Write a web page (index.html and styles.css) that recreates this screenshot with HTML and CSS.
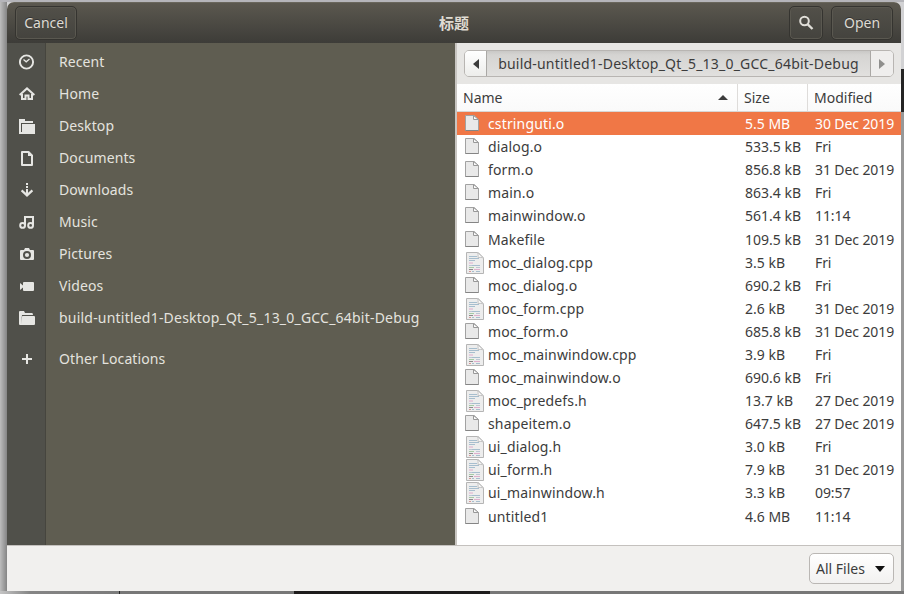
FILE: index.html
```html
<!DOCTYPE html>
<html lang="en">
<head>
  <meta charset="UTF-8" />
  <meta name="viewport" content="width=device-width, initial-scale=1.0"/>
  <title>标题</title>
  <link rel="stylesheet" href="styles.css">
</head>
<body>
  <div class="backdrop backdrop-left"></div>
  <div class="backdrop backdrop-right"></div>
  <div class="backdrop backdrop-line"></div>
  <div class="backdrop backdrop-bottom"></div>
  <div class="backdrop backdrop-top"></div>

  <div class="dialog">
    <div class="titlebar">
      <button class="dark-button cancel">Cancel</button>
      <div class="title">标题</div>
      <button class="dark-button search" aria-label="Search">
        <svg width="16" height="16" viewBox="0 0 16 16"><circle cx="6.5" cy="6" r="4.3" fill="none" stroke="#e0ded8" stroke-width="2"/><path d="M9.5 9.2l5 4.8" stroke="#e0ded8" stroke-width="2.4"/></svg>
      </button>
      <button class="dark-button open">Open</button>
    </div>

    <div class="content">
      <div class="sidebar">
        <div class="place">
          <svg class="place-icon" viewBox="0 0 16 16"><circle cx="7.5" cy="8" r="6.6" fill="none" stroke="#e6e6e3" stroke-width="1.9"/><path d="M4.500 5.5l2.7 2.3L10.500 5" fill="none" stroke="#e6e6e3" stroke-width="1.3"/></svg>
          <span class="place-name">Recent</span>
        </div>
        <div class="place">
          <svg class="place-icon" viewBox="0 0 16 16"><path d="M.6 9L8 2.4 15.4 9" fill="none" stroke="#e6e6e3" stroke-width="2"/><path d="M2 8v6h5v-4h2v4h5V8h-2L8 4.400 4 8z" fill="#e6e6e3" fill-opacity="0"/><path d="M3 8v5h3.500V9.500h3V13H13V8" fill="none" stroke="#e6e6e3" stroke-width="2"/></svg>
          <span class="place-name">Home</span>
        </div>
        <div class="place">
          <svg class="place-icon" viewBox="0 0 16 16"><path d="M0 1h6v2h8v2H2v9h1V6h13v10H0z" fill="#e6e6e3"/></svg>
          <span class="place-name">Desktop</span>
        </div>
        <div class="place">
          <svg class="place-icon" viewBox="0 0 16 16"><path d="M3 2h6.5L13 5.5V15H3z" fill="none" stroke="#e6e6e3" stroke-width="2" stroke-linejoin="round"/><path d="M9 2v4h4z" fill="#e6e6e3"/></svg>
          <span class="place-name">Documents</span>
        </div>
        <div class="place">
          <svg class="place-icon" viewBox="0 0 16 16"><path d="M7 1h2v2H7zM7 4h2v2H7zM7 7h2v5H7z" fill="#e6e6e3"/><path d="M2.6 8.4L8 13.4l5.4-5" fill="none" stroke="#e6e6e3" stroke-width="2.2"/></svg>
          <span class="place-name">Downloads</span>
        </div>
        <div class="place">
          <svg class="place-icon" viewBox="0 0 16 16"><path d="M6 11V3h8v8" fill="none" stroke="#e6e6e3" stroke-width="2"/><circle cx="3.6" cy="11.4" r="2.4" fill="none" stroke="#e6e6e3" stroke-width="2"/><circle cx="11.6" cy="11.4" r="2.4" fill="none" stroke="#e6e6e3" stroke-width="2"/></svg>
          <span class="place-name">Music</span>
        </div>
        <div class="place">
          <svg class="place-icon" viewBox="0 0 16 16"><path fill-rule="evenodd" d="M2 4h3l1-2h4l1 2h3q1 0 1 1v8q0 1-1 1H2q-1 0-1-1V5q0-1 1-1zM8 5a4 4 0 1 0 0 8 4 4 0 0 0 0-8z" fill="#e6e6e3"/><circle cx="8" cy="9" r="2.1" fill="#e6e6e3"/></svg>
          <span class="place-name">Pictures</span>
        </div>
        <div class="place">
          <svg class="place-icon" viewBox="0 0 16 16"><path d="M1 5l3 2.500V5q0-1 1-1h9q1 0 1 1v7q0 1-1 1H5q-1 0-1-1V9.500L1 12z" fill="#e6e6e3"/></svg>
          <span class="place-name">Videos</span>
        </div>
        <div class="place">
          <svg class="place-icon" viewBox="0 0 16 16"><path d="M0 2q0-1 1-1h4l1 2h7q1 0 1 2H3L2 14 3.2 6H15q1 0 1 1v7q0 1-1 1H1q-1 0-1-1z" fill="#e6e6e3"/></svg>
          <span class="place-name path-text">build-untitled1-Desktop_Qt_5_13_0_GCC_64bit-Debug</span>
        </div>
        <div class="place other">
          <svg class="place-icon" viewBox="0 0 16 16"><path d="M7 3h2v4h4v2H9v4H7V9H3V7h4z" fill="#e6e6e3"/></svg>
          <span class="place-name">Other Locations</span>
        </div>
      </div>

      <div class="browser">
        <div class="pathbar-area">
          <div class="pathbar">
            <button class="path-arrow" aria-label="Back"><svg width="6" height="10" viewBox="0 0 6 10"><path d="M6 0v10L0 5z" fill="#3c3c3c"/></svg></button>
            <button class="path-current path-text">build-untitled1-Desktop_Qt_5_13_0_GCC_64bit-Debug</button>
            <button class="path-arrow next" aria-label="Forward"><svg width="6" height="10" viewBox="0 0 6 10"><path d="M0 0v10l6-5z" fill="#8f8f8d"/></svg></button>
          </div>
        </div>
        <div class="file-row file-head">
          <span class="head-name">Name <svg width="10" height="5" viewBox="0 0 10 5"><path d="M0 5L5 0l5 5z" fill="#3c3c3c"/></svg></span>
          <span class="head-size">Size</span>
          <span class="head-date">Modified</span>
        </div>
        <div class="files" id="files"></div>
      </div>
    </div>

    <div class="footer">
      <button class="filter">All Files <svg width="10" height="6" viewBox="0 0 10 6"><path d="M0 0h10L5 6z" fill="#111"/></svg></button>
    </div>
  </div>

  <script>
    const files = [
      ["cstringuti.o", "5.5 MB", "30 Dec 2019"],
      ["dialog.o", "533.5 kB", "Fri"],
      ["form.o", "856.8 kB", "31 Dec 2019"],
      ["main.o", "863.4 kB", "Fri"],
      ["mainwindow.o", "561.4 kB", "11:14"],
      ["Makefile", "109.5 kB", "31 Dec 2019"],
      ["moc_dialog.cpp", "3.5 kB", "Fri"],
      ["moc_dialog.o", "690.2 kB", "Fri"],
      ["moc_form.cpp", "2.6 kB", "31 Dec 2019"],
      ["moc_form.o", "685.8 kB", "31 Dec 2019"],
      ["moc_mainwindow.cpp", "3.9 kB", "Fri"],
      ["moc_mainwindow.o", "690.6 kB", "Fri"],
      ["moc_predefs.h", "13.7 kB", "27 Dec 2019"],
      ["shapeitem.o", "647.5 kB", "27 Dec 2019"],
      ["ui_dialog.h", "3.0 kB", "Fri"],
      ["ui_form.h", "7.9 kB", "31 Dec 2019"],
      ["ui_mainwindow.h", "3.3 kB", "09:57"],
      ["untitled1", "4.6 MB", "11:14"]
    ];

    const plainIcon = `<svg class="file-icon" width="14" height="16" viewBox="0 0 14 16">
      <path d="M.5.5h8.7l4.3 4.3v10.7H.5z" fill="#e9e9e9" stroke="#a2a2a2"/>
      <path d="M.5 15.5h13" stroke="#858585"/>
      <path d="M8.5.5v4h5z" fill="#fafafa" stroke="#999"/></svg>`;

    const sourceIcon = `<svg class="file-icon source" width="18" height="22" viewBox="0 0 18 22">
      <path d="M.5.5h11.7l5.3 5.3v15.7H.5z" fill="#ededed" stroke="#b5b5b5"/>
      <path d="M11.5.5q1 2 .5 5 3-.5 5.5.5z" fill="#fafafa" stroke="#c4c4c4"/>
      <g fill="none" stroke-width=".8" opacity=".8">
        <path d="M3 4.5h8M3 6.5h10M3 8.5h6M6 13.5h8" stroke="#7fa3bc"/>
        <path d="M3 11h4M8 17.5h6" stroke="#d98bbb"/>
        <path d="M3 13.5h3M10 15.5h4" stroke="#a3b0c4"/>
        <path d="M3 15.5h5" stroke="#7db77d"/>
        <path d="M3 17.5h4" stroke="#555"/>
        <path d="M3 19.5h2" stroke="#c66"/>
        <path d="M6 19.5h2M10 19.5h4" stroke="#7fa3bc"/>
      </g></svg>`;

    const filesEl = document.getElementById("files");
    files.forEach(([name, size, date], i) => {
      const row = document.createElement("div");
      row.className = i === 0 ? "file-row selected" : "file-row";
      const icon = /\.(cpp|h)$/.test(name) ? sourceIcon : plainIcon;
      row.innerHTML = `<span class="icon-cell">${icon}</span><span class="file-name">${name}</span><span class="file-size">${size}</span><span class="file-date">${date}</span>`;
      filesEl.appendChild(row);
    });
  </script>
</body>
</html>
```
FILE: styles.css
```css
* {
  box-sizing: border-box;
}

body {
  margin: 0;
  padding: 2px 3px 3px 7px;
  height: 594px;
  overflow: hidden;
  position: relative;
  background-color: #d2d2d4;
  font-family: "Noto Sans", "Noto Sans CJK SC", sans-serif;
  font-size: 14px;
  color: #3c3c3c;
}

button {
  font: inherit;
  color: inherit;
  padding: 0;
  margin: 0;
}

svg {
  display: block;
  flex: none;
}

/* windows behind the dialog */
.backdrop {
  position: absolute;
}

.backdrop-left {
  left: 0;
  top: 0;
  width: 7px;
  height: 594px;
  background: linear-gradient(to right, #bdbdbd, #858585);
}

.backdrop-right {
  right: 0;
  top: 69px;
  width: 3px;
  height: 43px;
  background: #242424;
}

.backdrop-line {
  right: 0;
  top: 112px;
  width: 3px;
  height: 482px;
  background: #989898;
}

.backdrop-bottom {
  left: 0;
  bottom: 0;
  width: 904px;
  height: 3px;
  background: linear-gradient(to right, #c4c4c4 0, #858585 30px, #7b7b7b 119px, #242424 119px, #242424 120px, #777 120px, #777 294px, #1e1c1c 294px, #1e1c1c 490px, #777 490px, #777 904px);
}

.backdrop-top {
  left: 0;
  top: 0;
  width: 904px;
  height: 2px;
  background: #b5b5ba;
}

.dialog {
  position: relative;
  width: 894px;
  height: 589px;
  display: flex;
  flex-direction: column;
  border-radius: 7px 7px 0 0;
  overflow: hidden;
  background: #f1f0ee;
}

.titlebar {
  flex: none;
  height: 41px;
  display: flex;
  align-items: flex-start;
  padding: 3px 8px;
  background: linear-gradient(#5b584f, #3d3c38);
  border-top: 1px solid #69665c;
  color: #dfdbd2;
}

.dark-button {
  height: 34px;
  border: 1px solid #353430;
  border-radius: 5px;
  background: linear-gradient(#525049, #44433e);
  box-shadow: inset 0 0 0 1px #5a5850;
  display: flex;
  align-items: center;
  justify-content: center;
  padding-bottom: 1px;
  text-shadow: 0 -1px #333;
}

.cancel {
  width: 62px;
}

.search {
  width: 34px;
  margin-right: 8px;
}

.open {
  width: 62px;
}

.title {
  flex: 1;
  padding: 6px 0 0 42px;
  text-align: center;
  font-size: 15px;
  line-height: 22px;
  font-weight: bold;
}

.content {
  height: 502px;
  display: flex;
}

.sidebar {
  width: 448px;
  padding-top: 3px;
  background: linear-gradient(to right, #50504a 38px, #46453e 38px, #46453e 39px, #5f5d51 39px);
  color: #e4e3df;
}

.place {
  display: flex;
  align-items: center;
  height: 32px;
  padding-left: 12px;
}

.place-icon {
  width: 16px;
  height: 16px;
  margin-right: 24px;
}

.place-name {
  padding-bottom: 2px;
  white-space: nowrap;
  letter-spacing: 0.1px;
}

.path-text {
  letter-spacing: 0.21px;
}

.other {
  margin-top: 9px;
}

.browser {
  flex: 1;
  min-width: 0;
  border-left: 2px solid #c8c5c1;
  background: #fff;
}

.pathbar-area {
  height: 41px;
  padding: 7px 7px 0;
  background: #e7e6e4;
}

.pathbar {
  display: flex;
  height: 27px;
  border: 1px solid #b8b5b2;
  border-radius: 5px;
  overflow: hidden;
}

.path-arrow {
  width: 21px;
  border: 0;
  background: linear-gradient(#fff, #ededeb);
  display: flex;
  align-items: center;
  justify-content: center;
}

.next {
  width: 22px;
  background: #efeeed;
}

.path-current {
  flex: 1;
  border: solid #aaa8a5;
  border-width: 0 1px;
  background: linear-gradient(#c9c8c6, #d5d4d2 4px, #e1e0de);
  white-space: nowrap;
}

.file-row {
  display: grid;
  grid-template-columns: 31px 250px 70px 86px;
  height: 23px;
  line-height: 23px;
  white-space: nowrap;
}

.file-head {
  grid-template-columns: 281px 70px 93px;
  height: 28px;
  line-height: 27px;
  background: linear-gradient(#fff, #fafafa);
  border-bottom: 1px solid #d8d6d4;
}

.head-name {
  display: flex;
  justify-content: space-between;
  align-items: center;
  padding: 0 9px 0 6px;
  border-right: 1px solid #dedcda;
}

.head-size {
  padding-left: 6px;
  border-right: 1px solid #dedcda;
}

.head-date {
  padding-left: 6px;
}

.icon-cell {
  padding: 3px 0 0 8px;
}

.source {
  margin: -2px 0 0 1px;
}

.file-name {
  letter-spacing: 0.15px;
}

.file-size,
.file-date {
  padding-left: 7px;
}

.file-date {
  letter-spacing: -0.1px;
}

.files .file-row:nth-child(6),
.files .file-row:nth-child(18) {
  margin-top: 1px;
}

.selected {
  background: #f07746;
  color: #fff;
}

.footer {
  height: 46px;
  border-top: 1px solid #c4c1be;
  display: flex;
  justify-content: flex-end;
  padding: 7px 7px 0;
}

.filter {
  width: 85px;
  height: 31px;
  border: 1px solid #bab7b4;
  border-radius: 5px;
  background: linear-gradient(#fff, #f2f1f0);
  display: flex;
  align-items: center;
  justify-content: space-between;
  padding: 0 8px 0 6px;
}
```
